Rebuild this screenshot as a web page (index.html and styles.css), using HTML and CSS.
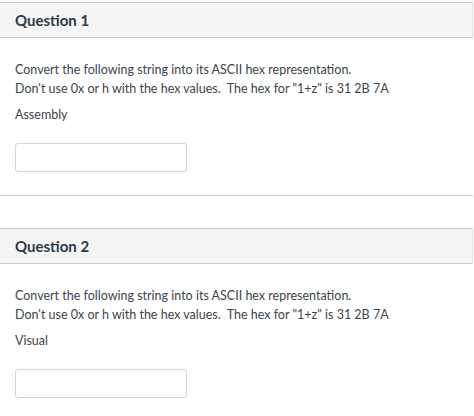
FILE: index.html
```html
<!DOCTYPE html>
<html>
<head>
<meta charset="utf-8">
<link rel="stylesheet" href="styles.css">
</head>
<body>
<div class="page">
  <section class="question">
    <div class="q-header"><h2 class="q-title">Question 1</h2></div>
    <div class="q-body">
      <p class="q-text">Convert the following string into its ASCII hex representation.<br>Don't use 0x or h with the hex values.&nbsp; The hex for "1+z" is 31 2B 7A</p>
      <p class="q-word">Assembly</p>
      <input class="q-input" type="text">
    </div>
  </section>
  <section class="question second">
    <div class="q-header"><h2 class="q-title">Question 2</h2></div>
    <div class="q-body">
      <p class="q-text">Convert the following string into its ASCII hex representation.<br>Don't use 0x or h with the hex values.&nbsp; The hex for "1+z" is 31 2B 7A</p>
      <p class="q-word">Visual</p>
      <input class="q-input" type="text">
    </div>
  </section>
</div>
</body>
</html>
```
FILE: styles.css
```css
html, body {
  margin: 0;
  padding: 0;
  background: #ffffff;
}
body {
  font-family: Lato, "Open Sans", sans-serif;
  color: #3b454c;
}
.page {
  padding-top: 2px;
  width: 473px;
}
.question {
  border-bottom: 1px solid #c9cdd0;
}
.question.second {
  margin-top: 32px;
  border-bottom: none;
}
.q-header {
  background: #f5f5f5;
  border-top: 1px solid #c9cdd0;
  border-bottom: 1px solid #c9cdd0;
  border-right: 1px solid #e2e4e6;
  height: 34px;
  display: flex;
  align-items: center;
  padding-left: 15px;
}
.q-title {
  margin: 0;
  font-size: 15px;
  font-weight: 700;
  color: #2d3b45;
}
.q-body {
  padding: 22px 15px 23px 15px;
}
.q-text {
  margin: 0;
  font-size: 12.5px;
  line-height: 19px;
}
.q-word {
  margin: 7px 0 0 0;
  font-size: 12.5px;
  line-height: 19px;
}
.q-input {
  display: block;
  margin-top: 19px;
  width: 172px;
  height: 29px;
  box-sizing: border-box;
  border: 1px solid #d3d6d9;
  border-radius: 3px;
  background: #fff;
  padding: 0;
}
```
